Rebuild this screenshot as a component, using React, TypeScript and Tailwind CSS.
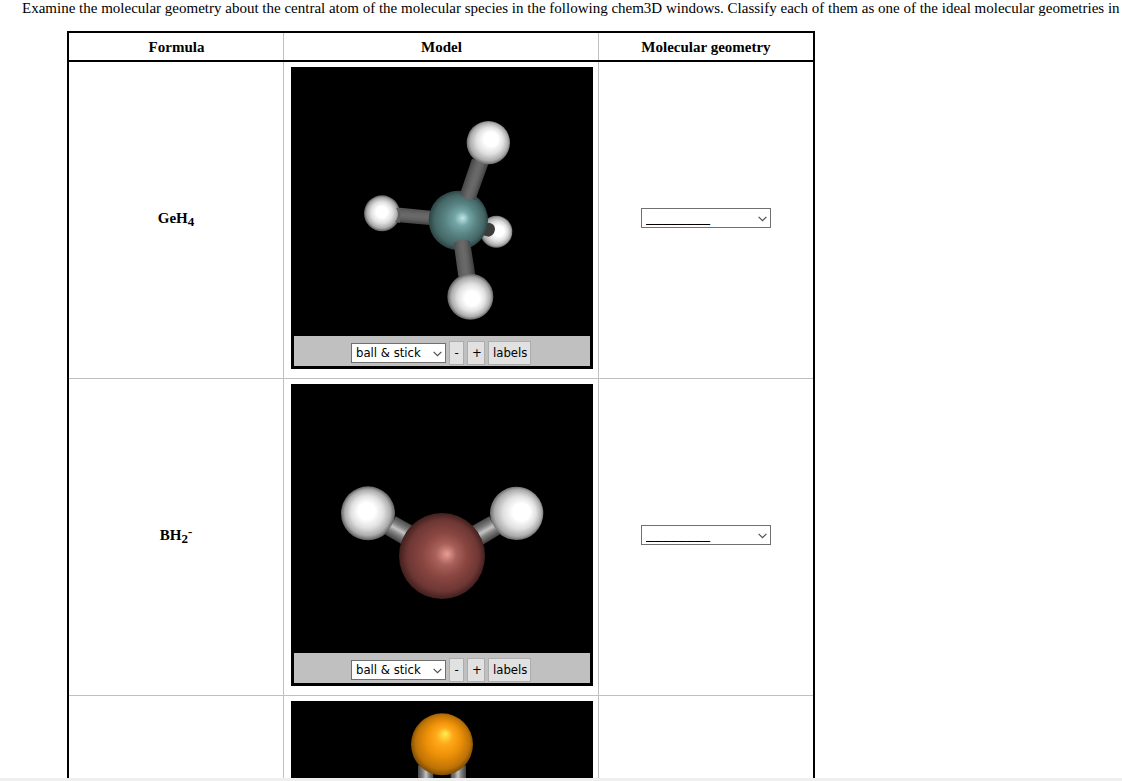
import type { ReactNode } from "react";

type Highlight = { id: string; cx: number; cy: number; r: number; hx: number; hy: number };

const HYDROGEN = ["#ffffff", "#ffffff", "#e0e0e0", "#acacac", "#4c4c4c"];
const GERMANIUM = ["#c0e6e6", "#74a5a5", "#5a8484", "#446666", "#263a3a"];
const BORON = ["#e89c94", "#a8605a", "#8a4641", "#6e3734", "#381b19"];
const PHOSPHORUS = ["#fff050", "#ffa91c", "#ee9108", "#bd7206", "#5e3802"];

const STOPS: Record<string, number[]> = {
  soft: [0, 0.3, 0.58, 0.82, 1],
  tight: [0, 0.24, 0.5, 0.8, 1],
};

function Ball({ id, cx, cy, r, hx, hy, colors }: Highlight & { colors: string[] }) {
  const stops = colors === HYDROGEN ? STOPS.soft : STOPS.tight;
  const reach = r + Math.hypot(hx - cx, hy - cy) * 0.25;
  return (
    <>
      <radialGradient id={id} gradientUnits="userSpaceOnUse" cx={cx} cy={cy} r={reach} fx={hx} fy={hy}>
        {stops.map((offset, i) => (
          <stop key={offset} offset={offset} stopColor={colors[i]} />
        ))}
      </radialGradient>
      <circle cx={cx} cy={cy} r={r} fill={`url(#${id})`} />
    </>
  );
}

type StickProps = { id: string; d: string; from: [number, number]; to: [number, number]; bright?: boolean };

function Stick({ id, d, from, to, bright }: StickProps) {
  return (
    <>
      <linearGradient id={id} gradientUnits="userSpaceOnUse" x1={from[0]} y1={from[1]} x2={to[0]} y2={to[1]}>
        <stop offset="0" stopColor={bright ? "#484848" : "#4c4c4c"} />
        <stop offset="0.3" stopColor={bright ? "#808080" : "#646464"} />
        <stop offset="0.5" stopColor={bright ? "#c4c4c4" : "#6a6a6a"} />
        <stop offset="0.7" stopColor={bright ? "#808080" : "#606060"} />
        <stop offset="1" stopColor={bright ? "#404040" : "#3c3c3c"} />
      </linearGradient>
      <path d={d} fill={`url(#${id})`} />
    </>
  );
}

function Germane() {
  return (
    <g transform="translate(138 90)">
      <Ball id="ge-h-back" cx={469} cy={395} r={48} hx={480} hy={393} colors={HYDROGEN} />
      <path d="M430 372 L448 368 Q465 372 465 388 Q463 408 446 410 L430 406Z" fill="#3c3c3c" />
      <Stick id="ge-s-left" d="M166 322 L272 332 L268 375 L166 366Z" from={[220, 324]} to={[216, 373]} />
      <Ball id="ge-h-left" cx={126} cy={340} r={54} hx={125} hy={334} colors={HYDROGEN} />
      <path d="M168 323 L182 324 L180 368 L165 366 Q182 345 168 323Z" fill="#606060" />
      <Ball id="ge-core" cx={355} cy={361} r={89} hx={369} hy={354} colors={GERMANIUM} />
      <Stick id="ge-s-top" d="M396 176 L446 190 L406 300 Q380 302 360 282Z" from={[380, 232]} to={[427, 248]} />
      <Ball id="ge-h-top" cx={445} cy={128} r={65} hx={457} hy={113} colors={HYDROGEN} />
      <Stick id="ge-s-bottom" d="M341 429 Q363 412 390 424 L407 530 L355 530Z" from={[347, 478]} to={[399, 472]} />
      <Ball id="ge-h-bottom" cx={391} cy={590} r={69} hx={399} hy={598} colors={HYDROGEN} />
    </g>
  );
}

function Boranide() {
  return (
    <g transform="translate(93 249)">
      <Ball id="b-h-left" cx={129} cy={130} r={81} hx={123} hy={120} colors={HYDROGEN} />
      <Ball id="b-h-right" cx={575} cy={130} r={80} hx={596} hy={124} colors={HYDROGEN} />
      <Stick id="b-s-left" d="M212 139 L275 174 L244 231 L179 193 Q201 170 212 139Z" from={[240, 154]} to={[208, 210]} bright />
      <Stick id="b-s-right" d="M493 139 L430 174 L462 231 L526 193 Q504 170 493 139Z" from={[465, 154]} to={[497, 210]} bright />
      <Ball id="b-core" cx={351} cy={258} r={129} hx={367} hy={252} colors={BORON} />
    </g>
  );
}

function PhosphorusSpecies() {
  return (
    <g transform="translate(-27 -189)">
      <Stick id="p-s-left" d="M399 373 H445 V560 H399Z" from={[399, 0]} to={[447, 0]} bright />
      <Stick id="p-s-right" d="M497 373 H543 V560 H497Z" from={[495, 0]} to={[543, 0]} bright />
      <Ball id="p-top" cx={471} cy={310} r={93} hx={481} hy={277} colors={PHOSPHORUS} />
    </g>
  );
}

function Chevron({ className }: { className: string }) {
  return (
    <svg aria-hidden="true" viewBox="0 0 9 6" className={`pointer-events-none absolute h-[6px] w-[9px] ${className}`}>
      <path d="M0.6 0.8 L4.5 4.7 L8.4 0.8" fill="none" stroke="#505050" strokeWidth="1.2" />
    </svg>
  );
}

const CONTROL_BUTTON =
  "h-6 border border-[#adadad] bg-[#e1e1e1] px-1 text-center text-[13px] leading-[20px]";

function ModelViewer({ label, children }: { label: string; children: ReactNode }) {
  return (
    <div className="mx-auto w-[302px] border-[3px] border-black bg-black">
      <svg role="img" aria-label={label} viewBox="0 0 888 798" className="block w-full bg-black">
        {children}
      </svg>
      <div className="flex h-[30px] items-center justify-center gap-[3px] bg-[#c0c0c0] pt-1 pr-[2px] font-['DejaVu_Sans_Condensed','DejaVu_Sans',sans-serif] text-[13px]">
        <div className="relative">
          <select
            aria-label="Display style"
            className="block h-5 w-[95px] appearance-none border border-[#707070] bg-white pl-1 leading-[18px]"
          >
            <option>ball &amp; stick</option>
          </select>
          <Chevron className="top-2 right-1" />
        </div>
        <button type="button" aria-label="Zoom out" className={`w-[15px] ${CONTROL_BUTTON}`}>-</button>
        <button type="button" aria-label="Zoom in" className={`w-[18px] ${CONTROL_BUTTON}`}>+</button>
        <button type="button" className={`w-[43px] ${CONTROL_BUTTON}`}>labels</button>
      </div>
    </div>
  );
}

const SPECIES: { key: string; formula: ReactNode; scene: ReactNode }[] = [
  {
    key: "GeH4",
    formula: <>GeH<sub className="bottom-[-3px] text-[13px]">4</sub></>,
    scene: <Germane />,
  },
  {
    key: "BH2-",
    formula: <>BH<sub className="bottom-[-3px] text-[13px]">2</sub><sup className="top-[-4px] text-[13px]">-</sup></>,
    scene: <Boranide />,
  },
  { key: "third", formula: null, scene: <PhosphorusSpecies /> },
];

const HEAD = "h-[29px] border-b-2 border-black p-0 text-center font-bold";
const CELL = "border-b border-[#c0c0c0] pt-[5px] pb-[9px] text-center align-middle";

export default function App() {
  return (
    <div className="flex h-screen flex-col bg-white font-['Liberation_Serif',serif] text-black">
      <main className="min-h-0 flex-1 overflow-hidden">
        <p className="h-[31px] pl-[22px] text-[15px] leading-[17px] whitespace-nowrap">
          Examine the molecular geometry about the central atom of the molecular species in the following chem3D windows. Classify each of them as one of the ideal molecular geometries in
        </p>
        <table className="ml-[67px] w-[748px] table-fixed border-separate border-spacing-0 border-2 border-black text-[15px] leading-[18px]">
          <colgroup>
            <col className="w-[215px]" />
            <col className="w-[315px]" />
            <col />
          </colgroup>
          <thead>
            <tr>
              <th className={`${HEAD} shadow-[inset_-1px_0_0_#c0c0c0]`}>Formula</th>
              <th className={`${HEAD} shadow-[inset_-1px_0_0_#c0c0c0]`}>Model</th>
              <th className={HEAD}>Molecular geometry</th>
            </tr>
          </thead>
          <tbody>
            {SPECIES.map((s) => (
              <tr key={s.key}>
                <th scope="row" className={`${CELL} border-r font-bold`}>{s.formula}</th>
                <td className={`${CELL} border-r pl-[2px]`}>
                  <ModelViewer label={`Model of ${s.key}`}>{s.scene}</ModelViewer>
                </td>
                <td className={CELL}>
                  <div className="relative mx-auto w-[130px]">
                    <select
                      aria-label={`Molecular geometry of ${s.key}`}
                      className="block h-5 w-full appearance-none border border-[#707070] bg-white pl-1 text-[16px] leading-[18px]"
                    >
                      <option>________</option>
                    </select>
                    <Chevron className="top-2 right-1" />
                  </div>
                </td>
              </tr>
            ))}
          </tbody>
        </table>
      </main>
      <footer className="h-[3px] shrink-0 bg-[#efefef]" />
    </div>
  );
}
